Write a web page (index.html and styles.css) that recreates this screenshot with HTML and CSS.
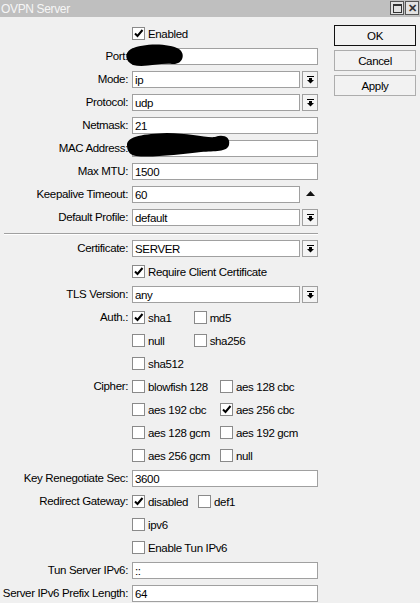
FILE: index.html
```html
<!DOCTYPE html>
<html lang="en">
<head>
  <meta charset="UTF-8" />
  <title>OVPN Server</title>
  <link rel="stylesheet" href="styles.css">
</head>
<body>

  <div class="title-bar">
    <span class="title">OVPN Server</span>
    <div class="title-btns">
      <span class="tb-btn"><span class="max-icon"></span></span>
      <span class="tb-btn close">✕</span>
    </div>
  </div>

  <div class="window">
    <div class="form">
      <div class="row">
        <span class="lbl"></span>
        <label class="check"><span class="box on"></span>Enabled</label>
      </div>
      <div class="row">
        <span class="lbl">Port:</span>
        <input class="text" type="text" value="" />
      </div>
      <div class="row">
        <span class="lbl">Mode:</span>
        <div class="combo"><input class="text" type="text" value="ip" /><span class="drop"></span></div>
      </div>
      <div class="row">
        <span class="lbl">Protocol:</span>
        <div class="combo"><input class="text" type="text" value="udp" /><span class="drop"></span></div>
      </div>
      <div class="row">
        <span class="lbl">Netmask:</span>
        <input class="text" type="text" value="21" />
      </div>
      <div class="row">
        <span class="lbl">MAC Address:</span>
        <input class="text" type="text" value="" />
      </div>
      <div class="row">
        <span class="lbl">Max MTU:</span>
        <input class="text" type="text" value="1500" />
      </div>
      <div class="row">
        <span class="lbl">Keepalive Timeout:</span>
        <div class="combo"><input class="text" type="text" value="60" /><span class="spin"></span></div>
      </div>
      <div class="row">
        <span class="lbl">Default Profile:</span>
        <div class="combo"><input class="text" type="text" value="default" /><span class="drop"></span></div>
      </div>

      <div class="sep"></div>

      <div class="row">
        <span class="lbl">Certificate:</span>
        <div class="combo"><input class="text" type="text" value="SERVER" /><span class="drop"></span></div>
      </div>
      <div class="row">
        <span class="lbl"></span>
        <label class="check"><span class="box on"></span>Require Client Certificate</label>
      </div>
      <div class="row">
        <span class="lbl">TLS Version:</span>
        <div class="combo"><input class="text" type="text" value="any" /><span class="drop"></span></div>
      </div>
      <div class="row">
        <span class="lbl">Auth.:</span>
        <div class="checks">
          <label class="check"><span class="box on"></span>sha1</label>
          <label class="check"><span class="box"></span>md5</label>
          <label class="check"><span class="box"></span>null</label>
          <label class="check"><span class="box"></span>sha256</label>
          <label class="check"><span class="box"></span>sha512</label>
        </div>
      </div>
      <div class="row">
        <span class="lbl">Cipher:</span>
        <div class="checks">
          <label class="check"><span class="box"></span>blowfish 128</label>
          <label class="check"><span class="box"></span>aes 128 cbc</label>
          <label class="check"><span class="box"></span>aes 192 cbc</label>
          <label class="check"><span class="box on"></span>aes 256 cbc</label>
          <label class="check"><span class="box"></span>aes 128 gcm</label>
          <label class="check"><span class="box"></span>aes 192 gcm</label>
          <label class="check"><span class="box"></span>aes 256 gcm</label>
          <label class="check"><span class="box"></span>null</label>
        </div>
      </div>
      <div class="row">
        <span class="lbl">Key Renegotiate Sec:</span>
        <input class="text" type="text" value="3600" />
      </div>
      <div class="row">
        <span class="lbl">Redirect Gateway:</span>
        <div class="checks">
          <label class="check"><span class="box on"></span>disabled</label>
          <label class="check"><span class="box"></span>def1</label>
          <label class="check"><span class="box"></span>ipv6</label>
        </div>
      </div>
      <div class="row">
        <span class="lbl"></span>
        <label class="check"><span class="box"></span>Enable Tun IPv6</label>
      </div>
      <div class="row">
        <span class="lbl">Tun Server IPv6:</span>
        <input class="text" type="text" value="::" />
      </div>
      <div class="row">
        <span class="lbl">Server IPv6 Prefix Length:</span>
        <input class="text" type="text" value="64" />
      </div>
    </div>

    <div class="actions">
      <button class="btn default">OK</button>
      <button class="btn">Cancel</button>
      <button class="btn">Apply</button>
    </div>
  </div>

  <!-- redaction marks drawn over the screenshot -->
  <svg class="redact" width="420" height="603" viewBox="0 0 420 603">
    <path d="M131 49 C143 43 169 43 179 49 C186 54 183 65 172 64 C159 63 144 68 133 65 C125 61 124 53 131 49 Z" />
    <path d="M127 145 C127 136 144 134 167 133 C188 133 206 138 215 137 C223 134 231 137 229 145 C227 152 215 151 201 152 C181 154 152 158 136 156 C129 155 127 150 127 145 Z" />
  </svg>

</body>
</html>
```

FILE: styles.css
```css
:root {
  --bg: #f0f0f0;
  --title: #bfbfbf;
  --border: #a0a0a0;
  --text: #000;
}

* {
  margin: 0;
  padding: 0;
  box-sizing: border-box;
}

body {
  font-family: 'Liberation Sans', Arial, sans-serif;
  font-size: 11.5px;
  letter-spacing: -0.35px;
  background: var(--bg);
  color: var(--text);
  width: 420px;
  height: 603px;
  overflow: hidden;
}

.title-bar {
  height: 17px;
  background: var(--title);
  display: flex;
  justify-content: space-between;
  align-items: center;
}

.title {
  color: #f6f6f6;
  font-size: 12px;
  padding-left: 1px;
}

.title-btns {
  display: flex;
  gap: 1px;
  padding-right: 1px;
  align-self: flex-start;
  padding-top: 1px;
}

.tb-btn {
  width: 14px;
  height: 14px;
  border: 1px solid #555;
  background: #e2e2e2;
  display: flex;
  align-items: center;
  justify-content: center;
  font-size: 11px;
  font-weight: 700;
  color: #333;
}

.max-icon {
  width: 9px;
  height: 9px;
  border: 1px solid #333;
  border-top-width: 2px;
}

.window {
  display: flex;
  align-items: flex-start;
}

.form {
  width: 322px;
  padding-top: 5px;
}

.row {
  display: grid;
  grid-template-columns: 128px 186px;
  column-gap: 4px;
  align-items: start;
}

.lbl {
  text-align: right;
  line-height: 23px;
  height: 23px;
  white-space: nowrap;
}

.text {
  display: block;
  width: 186px;
  height: 17px;
  margin: 3px 0;
  border: 1px solid var(--border);
  background: #fff;
  font: inherit;
  letter-spacing: inherit;
  color: var(--text);
  padding: 0 2px;
  outline: none;
}

.combo {
  display: flex;
  gap: 2px;
}

.combo .text {
  width: 168px;
}

.drop,
.spin {
  width: 16px;
  height: 17px;
  margin-top: 3px;
  display: flex;
  align-items: center;
  justify-content: center;
}

.drop {
  border: 1px solid var(--border);
  background: #f4f4f4;
}

.drop::before {
  content: '';
  width: 7px;
  height: 8px;
  background: url("data:image/svg+xml,%3Csvg xmlns='http://www.w3.org/2000/svg' width='7' height='8'%3E%3Crect width='7' height='1' fill='%23000'/%3E%3Crect x='2' y='2' width='3' height='2' fill='%23000'/%3E%3Cpath d='M0 4h7L3.5 7.5z' fill='%23000'/%3E%3C/svg%3E") no-repeat;
}

.spin::before {
  content: '';
  width: 9px;
  height: 5px;
  margin-left: 1px;
  margin-top: -2px;
  background: url("data:image/svg+xml,%3Csvg xmlns='http://www.w3.org/2000/svg' width='9' height='5'%3E%3Cpath d='M0 5h9L4.5 0z' fill='%23111'/%3E%3C/svg%3E") no-repeat;
}

.check {
  display: flex;
  align-items: center;
  height: 23px;
  white-space: nowrap;
}

.box {
  width: 13px;
  height: 13px;
  margin-right: 3px;
  border: 1px solid #8a8a8a;
  background: #fff;
  flex-shrink: 0;
}

.box.on {
  background: #fff url("data:image/svg+xml,%3Csvg xmlns='http://www.w3.org/2000/svg' width='11' height='11'%3E%3Cpath d='M2 5.5l2.5 2.5 5-6' stroke='%23000' stroke-width='2' fill='none'/%3E%3C/svg%3E") no-repeat center;
}

.checks {
  display: grid;
  grid-template-columns: auto auto;
  justify-content: start;
  column-gap: 10px;
  grid-auto-rows: 23px;
}

.sep {
  width: 314px;
  margin: 4px 0 2px 4px;
  border-top: 1px solid var(--border);
  border-bottom: 1px solid #fff;
}

.actions {
  display: flex;
  flex-direction: column;
  gap: 4px;
  margin: 8px 0 0 12px;
}

.btn {
  width: 82px;
  height: 21px;
  font: inherit;
  letter-spacing: inherit;
  color: var(--text);
  background: #f2f2f2;
  border: 1px solid #adadad;
}

.btn.default {
  border-color: #111;
}

.redact {
  position: absolute;
  top: 0;
  left: 0;
  pointer-events: none;
}

.redact path {
  fill: #000;
}
```
